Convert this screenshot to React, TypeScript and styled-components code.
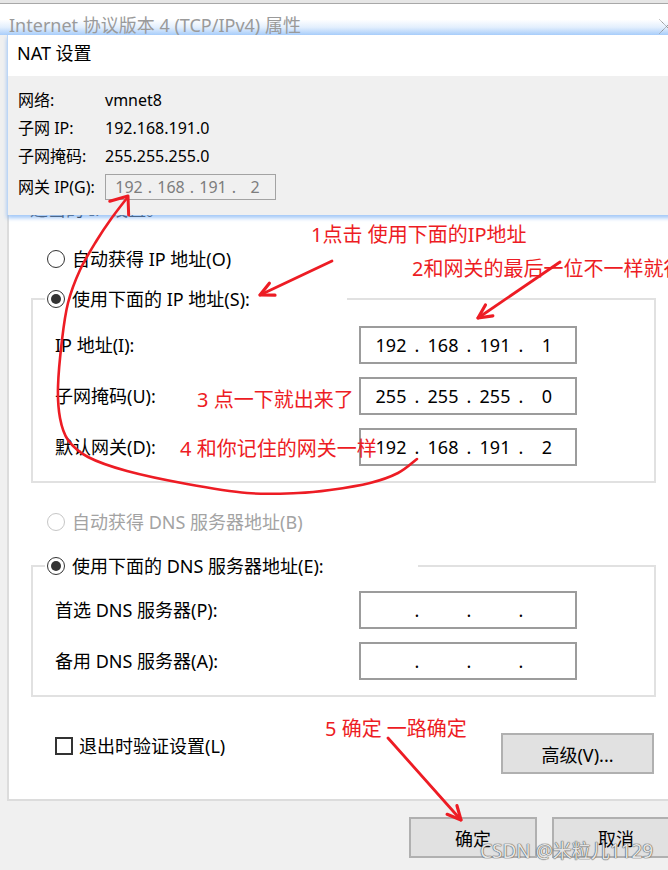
import React from "react";
import styled, { createGlobalStyle } from "styled-components";

const FONT = `"Noto Sans", "Noto Sans CJK SC", sans-serif`;

const GlobalStyle = createGlobalStyle`
  html, body { margin: 0; padding: 0; background: #f0f0f0; }
  body { width: 668px; height: 870px; overflow: hidden; font-family: ${FONT}; }
  #root { width: 668px; height: 870px; }
`;

const Screen = styled.div`
  position: relative;
  width: 668px;
  height: 870px;
  overflow: hidden;
  background: #f0f0f0;
  font-family: ${FONT};
  color: #000;
`;

const Dialog = styled.div`
  width: 690px;
  display: flex;
  flex-direction: column;
`;

const TopStrip = styled.div`
  height: 3px;
  background: #e6e6e6;
  border-bottom: 1px solid #a8a8a8;
`;

const TitleBar = styled.div`
  height: 31px;
  box-sizing: border-box;
  padding: 10px 16px 0 9px;
  display: flex;
  justify-content: space-between;
  align-items: flex-start;
  background: linear-gradient(
    to bottom,
    #ffffff 0%,
    #ffffff 50%,
    #e3effd 75%,
    #a9cdfa 100%
  );
`;

const TitleText = styled.span`
  font-size: 18px;
  line-height: 22px;
  color: #9a9a9a;
  white-space: nowrap;
`;

const CloseGlyph = styled.svg`
  margin-top: 5px;
  flex: none;
`;

const Body = styled.div`
  display: flex;
  padding: 0 8px 0 7px;
`;

const Panel = styled.div`
  flex: 1;
  background: #fff;
  border-left: 2px solid #dcdcdc;
  border-bottom: 2px solid #dcdcdc;
  padding: 0 26px 25px 22px;
  display: flex;
  flex-direction: column;
`;

const CoveredNote = styled.div`
  margin-top: 162px;
  margin-left: -1px;
  font-size: 18px;
  line-height: 24px;
  height: 24px;
  white-space: nowrap;
`;

const RadioRow = styled.div<{ $mt: number }>`
  display: flex;
  align-items: center;
  gap: 7px;
  height: 24px;
  margin-top: ${(p) => p.$mt}px;
  margin-left: 16px;
`;

const RadioDot = styled.span<{ $checked?: boolean; $disabled?: boolean }>`
  box-sizing: border-box;
  width: 18px;
  height: 18px;
  flex: none;
  border-radius: 50%;
  border: 1.5px solid ${(p) => (p.$disabled ? "#c6c6c6" : "#333")};
  background: #fff;
  display: flex;
  align-items: center;
  justify-content: center;
  &::after {
    content: "";
    width: 10px;
    height: 10px;
    border-radius: 50%;
    background: #333;
    display: ${(p) => (p.$checked ? "block" : "none")};
  }
`;

const LabelText = styled.span<{ $disabled?: boolean }>`
  font-size: 18px;
  line-height: 24px;
  white-space: nowrap;
  color: ${(p) => (p.$disabled ? "#a3a3a3" : "#000")};
`;

const Group = styled.div<{ $mt: number; $pt: number }>`
  position: relative;
  margin-top: ${(p) => p.$mt}px;
  border: 2px solid #e1e1e1;
  padding: ${(p) => p.$pt}px 0 15px 22px;
  display: grid;
  grid-template-columns: 304px 218px;
  grid-auto-rows: 38px;
  row-gap: 13px;
  align-items: center;
`;

const Legend = styled.div<{ $w: number }>`
  position: absolute;
  top: -13px;
  left: 12px;
  width: ${(p) => p.$w}px;
  height: 24px;
  box-sizing: border-box;
  padding-left: 2px;
  background: #fff;
  display: flex;
  align-items: center;
  gap: 7px;
`;

const IpBox = styled.div<{ $small?: boolean }>`
  box-sizing: border-box;
  display: grid;
  grid-template-columns: ${(p) =>
    p.$small
      ? "36px 6px 36px 6px 36px 6px 36px"
      : "46px 6px 46px 6px 46px 6px 46px"};
  align-items: center;
  width: ${(p) => (p.$small ? 171 : 218)}px;
  height: ${(p) => (p.$small ? 26 : 38)}px;
  padding-left: ${(p) => (p.$small ? 5 : 7)}px;
  border: ${(p) => (p.$small ? "1px solid #a3a3a3" : "2px solid #9c9c9c")};
  background: ${(p) => (p.$small ? "#f0f0f0" : "#fff")};
  color: ${(p) => (p.$small ? "#7d7d7d" : "#000")};
  font-size: ${(p) => (p.$small ? 16 : 18)}px;
`;

const Seg = styled.span`
  text-align: center;
  line-height: 1;
  white-space: nowrap;
`;

const BottomRow = styled.div`
  margin-top: 36px;
  display: flex;
  justify-content: space-between;
  align-items: flex-start;
`;

const CheckRow = styled.label`
  display: flex;
  align-items: center;
  gap: 6px;
  height: 26px;
  margin-left: 24px;
`;

const CheckBox = styled.span`
  box-sizing: border-box;
  width: 18px;
  height: 18px;
  border: 2px solid #333;
  background: #fff;
  flex: none;
`;

const Button = styled.button<{ $w: number }>`
  box-sizing: border-box;
  width: ${(p) => p.$w}px;
  height: 41px;
  flex: none;
  background: #e1e1e1;
  border: 2px solid #b0b0b0;
  font-family: ${FONT};
  font-size: 18px;
  color: #000;
  padding: 0;
`;

const AdvButton = styled(Button)`
  margin-right: 2px;
`;

const Footer = styled.div`
  display: flex;
  justify-content: flex-end;
  gap: 15px;
  padding: 16px 10px 0 0;
`;

/* NAT overlay window */
const NatWindow = styled.div`
  position: absolute;
  top: 35px;
  left: 7px;
  width: 700px;
  height: 180px;
  display: flex;
  flex-direction: column;
  border-left: 1px solid #bcd6f6;
  box-shadow: 0 3px 4px rgba(130, 180, 245, 0.75);
`;

const NatHeader = styled.div`
  height: 41px;
  box-sizing: border-box;
  padding: 6px 0 0 9px;
  background: #fff;
  font-size: 18px;
  line-height: 24px;
`;

const NatBody = styled.div`
  flex: 1;
  background: #f0f0f0;
  padding: 10px 0 0 10px;
  display: grid;
  grid-template-columns: 87px auto;
  grid-template-rows: 28px 28px 28px 34px;
  align-items: center;
  align-content: start;
  font-size: 16px;
`;

const NatCell = styled.span`
  line-height: 20px;
  white-space: nowrap;
`;

/* annotations */
const Notes = styled.div`
  position: absolute;
  inset: 0;
  pointer-events: none;
`;

const NoteText = styled.span<{ $x: number; $y: number }>`
  position: absolute;
  left: ${(p) => p.$x}px;
  top: ${(p) => p.$y}px;
  font-family: ${FONT};
  font-size: 20px;
  line-height: 24px;
  color: #ed1c24;
  white-space: nowrap;
`;

const Watermark = styled.span`
  position: absolute;
  left: 480px;
  top: 838px;
  font-family: ${FONT};
  font-size: 19px;
  line-height: 26px;
  color: rgba(255, 255, 255, 0.85);
  text-shadow: 0 0 1px #555, 0 0 1px #555, 0 0 1px #777;
  white-space: nowrap;
`;

type P = [number, number];

const smooth = (pts: P[]) => {
  let d = `M ${pts[0][0]} ${pts[0][1]}`;
  for (let i = 0; i < pts.length - 1; i++) {
    const p0 = pts[i - 1] || pts[i];
    const p1 = pts[i];
    const p2 = pts[i + 1];
    const p3 = pts[i + 2] || p2;
    const c1 = [p1[0] + (p2[0] - p0[0]) / 6, p1[1] + (p2[1] - p0[1]) / 6];
    const c2 = [p2[0] - (p3[0] - p1[0]) / 6, p2[1] - (p3[1] - p1[1]) / 6];
    d += ` C ${c1[0]} ${c1[1]} ${c2[0]} ${c2[1]} ${p2[0]} ${p2[1]}`;
  }
  return d;
};

const head = (from: P, tip: P, len = 16, deg = 28) => {
  const a = Math.atan2(from[1] - tip[1], from[0] - tip[0]);
  const r = (deg * Math.PI) / 180;
  const b1 = [tip[0] + len * Math.cos(a + r), tip[1] + len * Math.sin(a + r)];
  const b2 = [tip[0] + len * Math.cos(a - r), tip[1] + len * Math.sin(a - r)];
  return `M ${b1[0]} ${b1[1]} L ${tip[0]} ${tip[1]} L ${b2[0]} ${b2[1]}`;
};

const curvePts: P[] = [
  [417, 459],
  [398, 473],
  [370, 483],
  [330, 490],
  [298, 493],
  [247, 493],
  [187, 484],
  [127, 471],
  [88, 457],
  [68, 440],
  [60, 418],
  [58, 387],
  [62, 340],
  [68, 303],
  [80, 270],
  [97, 240],
  [111, 219],
  [127, 198],
];

const arrows: { from: P; to: P }[] = [
  { from: [332, 261], to: [260, 295] },
  { from: [560, 262], to: [478, 318] },
  { from: [388, 738], to: [461, 820] },
];

const IpField: React.FC<{ parts: string[]; small?: boolean }> = ({
  parts,
  small,
}) => (
  <IpBox $small={small}>
    {parts.map((p, i) => (
      <React.Fragment key={i}>
        <Seg>{p}</Seg>
        {i < 3 && <Seg>.</Seg>}
      </React.Fragment>
    ))}
  </IpBox>
);

export default function App() {
  return (
    <Screen>
      <GlobalStyle />
      <Dialog>
        <TopStrip />
        <TitleBar>
          <TitleText>Internet 协议版本 4 (TCP/IPv4) 属性</TitleText>
          <CloseGlyph width="15" height="15" viewBox="0 0 15 15">
            <path
              d="M0.5 0.5 L14.5 14.5 M0.5 14.5 L14.5 0.5"
              stroke="#8a8a8a"
              strokeWidth="1"
              strokeDasharray="1.2 0.6"
              fill="none"
            />
          </CloseGlyph>
        </TitleBar>
        <Body>
          <Panel>
            <CoveredNote>适当的 IP 设置。</CoveredNote>
            <RadioRow $mt={26}>
              <RadioDot />
              <LabelText>自动获得 IP 地址(O)</LabelText>
            </RadioRow>
            <Group $mt={27} $pt={26}>
              <Legend $w={302}>
                <RadioDot $checked />
                <LabelText>使用下面的 IP 地址(S):</LabelText>
              </Legend>
              <LabelText>IP 地址(I):</LabelText>
              <IpField parts={["192", "168", "191", "1"]} />
              <LabelText>子网掩码(U):</LabelText>
              <IpField parts={["255", "255", "255", "0"]} />
              <LabelText>默认网关(D):</LabelText>
              <IpField parts={["192", "168", "191", "2"]} />
            </Group>
            <RadioRow $mt={27}>
              <RadioDot $disabled />
              <LabelText $disabled>自动获得 DNS 服务器地址(B)</LabelText>
            </RadioRow>
            <Group $mt={31} $pt={24}>
              <Legend $w={373}>
                <RadioDot $checked />
                <LabelText>使用下面的 DNS 服务器地址(E):</LabelText>
              </Legend>
              <LabelText>首选 DNS 服务器(P):</LabelText>
              <IpField parts={["", "", "", ""]} />
              <LabelText>备用 DNS 服务器(A):</LabelText>
              <IpField parts={["", "", "", ""]} />
            </Group>
            <BottomRow>
              <CheckRow>
                <CheckBox />
                <LabelText>退出时验证设置(L)</LabelText>
              </CheckRow>
              <AdvButton $w={153}>高级(V)...</AdvButton>
            </BottomRow>
          </Panel>
        </Body>
        <Footer>
          <Button $w={128}>确定</Button>
          <Button $w={128}>取消</Button>
        </Footer>
      </Dialog>

      <NatWindow>
        <NatHeader>NAT 设置</NatHeader>
        <NatBody>
          <NatCell>网络:</NatCell>
          <NatCell>vmnet8</NatCell>
          <NatCell>子网 IP:</NatCell>
          <NatCell>192.168.191.0</NatCell>
          <NatCell>子网掩码:</NatCell>
          <NatCell>255.255.255.0</NatCell>
          <NatCell>网关 IP(G):</NatCell>
          <IpField small parts={["192", "168", "191", "2"]} />
        </NatBody>
      </NatWindow>

      <Notes>
        <svg width="668" height="870" viewBox="0 0 668 870">
          <g
            stroke="#ed1c24"
            fill="none"
            strokeLinecap="round"
            strokeLinejoin="round"
          >
            <path d={smooth(curvePts)} strokeWidth="2.6" />
            <path d={head([112, 218], [128, 196], 19, 38)} strokeWidth="3" />
            {arrows.map((a, i) => (
              <React.Fragment key={i}>
                <path
                  d={`M ${a.from[0]} ${a.from[1]} L ${a.to[0]} ${a.to[1]}`}
                  strokeWidth="2.8"
                />
                <path d={head(a.from, a.to, 15, 26)} strokeWidth="3.2" />
              </React.Fragment>
            ))}
          </g>
        </svg>
        <NoteText $x={311} $y={223}>1点击 使用下面的IP地址</NoteText>
        <NoteText $x={412} $y={257}>2和网关的最后一位不一样就行</NoteText>
        <NoteText $x={197} $y={388}>3 点一下就出来了</NoteText>
        <NoteText $x={180} $y={437}>4 和你记住的网关一样</NoteText>
        <NoteText $x={325} $y={717}>5 确定 一路确定</NoteText>
        <Watermark>CSDN @米粒儿1129</Watermark>
      </Notes>
    </Screen>
  );
}
